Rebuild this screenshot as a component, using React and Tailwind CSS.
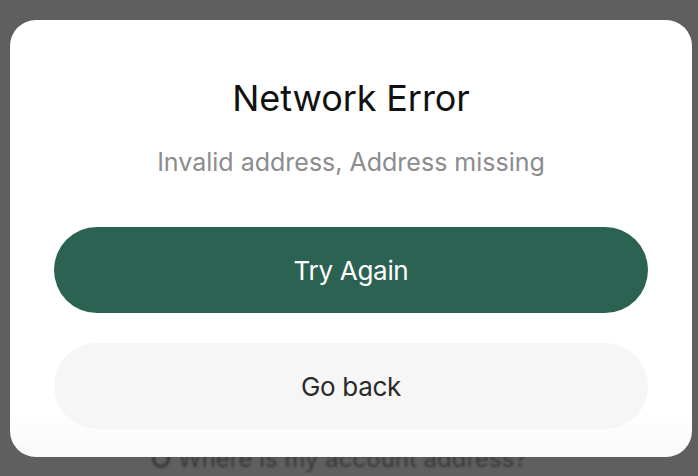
import React from "react";

export default function App() {
  return (
    <div
      className="relative h-[476px] w-[698px] overflow-hidden bg-[#5f5f5f] flex flex-col justify-end"
      style={{ fontFamily: "Inter, 'Noto Sans', sans-serif" }}
    >
      <div className="flex items-center gap-[8px] pl-[152px] pb-[2px] text-[#383838] text-[24px] leading-[30px] blur-[1px]">
        <span className="w-[18px] h-[18px] rounded-full border-[3px] border-[#383838]" />
        <span>Where is my account address?</span>
      </div>

      <div className="absolute top-[20px] left-[10px] w-[682px] h-[437px] rounded-[26px] bg-gradient-to-b from-white from-90% to-[#f9f9f9] flex flex-col items-center px-[44px] pt-[56px]">
        <h1 className="text-[36px] leading-[44px] text-[#111111] font-normal tracking-[-0.1px]">
          Network Error
        </h1>
        <p className="mt-[26px] text-[25px] leading-[32px] text-[#8c8c8c] tracking-[0px]">
          Invalid address, Address missing
        </p>
        <button className="mt-[49px] w-full h-[86px] rounded-full bg-[#2c6251] text-white text-[26px] tracking-[-0.3px]">
          Try Again
        </button>
        <button className="mt-[30px] w-full h-[86px] rounded-full bg-[#f6f6f6] text-[#2a2a2a] text-[26px] tracking-[-0.3px]">
          Go back
        </button>
      </div>
    </div>
  );
}
